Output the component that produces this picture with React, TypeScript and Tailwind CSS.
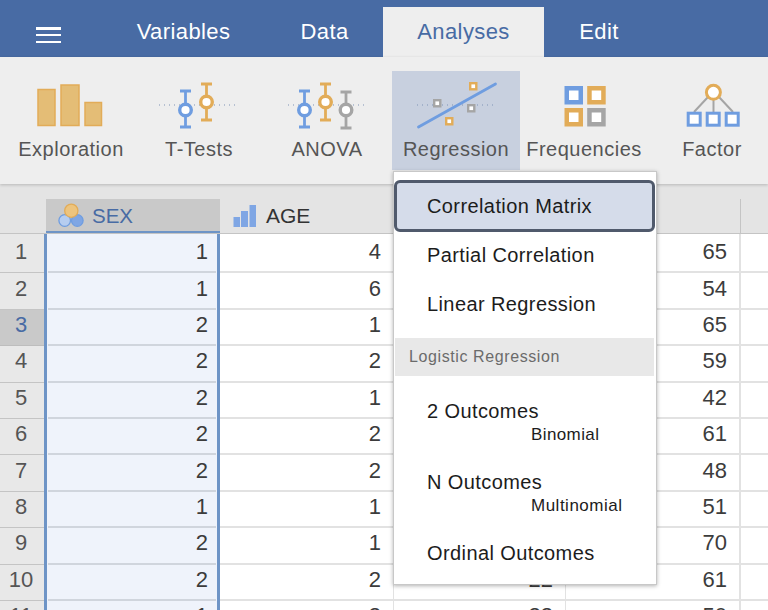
const tabs = [
  { name: "Variables", width: "w-[165px]" },
  { name: "Data", width: "w-[117px]" },
  { name: "Analyses", width: "w-[161px]", active: true },
  { name: "Edit", width: "w-[110px]" },
];

const rows = [
  { n: 1, sex: 1, age: 4, c: "", d: 65 },
  { n: 2, sex: 1, age: 6, c: "", d: 54 },
  { n: 3, sex: 2, age: 1, c: "", d: 65 },
  { n: 4, sex: 2, age: 2, c: "", d: 59 },
  { n: 5, sex: 2, age: 1, c: "", d: 42 },
  { n: 6, sex: 2, age: 2, c: "", d: 61 },
  { n: 7, sex: 2, age: 2, c: "", d: 48 },
  { n: 8, sex: 1, age: 1, c: "", d: 51 },
  { n: 9, sex: 2, age: 1, c: "", d: 70 },
  { n: 10, sex: 2, age: 2, c: "22", d: 61 },
  { n: 11, sex: 1, age: 3, c: "23", d: 50 },
];

const BLUE = "#6f9de0";
const ORANGE = "#e2ac58";
const GRAY = "#a5a5a5";

function Whisker({ x, top, bottom, cy, color }: { x: number; top: number; bottom: number; cy: number; color: string }) {
  return (
    <g stroke={color} strokeWidth="2.8" fill="none">
      <path d={`M${x - 5.5} ${top}H${x + 5.5}M${x - 5.5} ${bottom}H${x + 5.5}M${x} ${top}V${bottom}`} />
      <circle cx={x} cy={cy} r="5.8" fill="#fff" strokeWidth="3.4" />
    </g>
  );
}

function Dots({ x1, x2 }: { x1: number; x2: number }) {
  return <path d={`M${x1} 105H${x2}`} stroke="#7f93b5" strokeWidth="1" strokeDasharray="1 4" />;
}

function Square({ x, y, size, w, color }: { x: number; y: number; size: number; w: number; color: string }) {
  return <rect x={x + w / 2} y={y + w / 2} width={size - w} height={size - w} fill="#fff" stroke={color} strokeWidth={w} />;
}

// icons are drawn in page coordinates, the viewBox is the button's own slot
function ExplorationIcon() {
  return (
    <svg viewBox="7 71 128 60" className="h-[60px] w-[128px]">
      <g fill="#e4bd76" stroke={ORANGE} strokeWidth="1.5">
        <rect x="38" y="89.5" width="17" height="36" />
        <rect x="61" y="85" width="18" height="40.5" />
        <rect x="85" y="102.5" width="16.5" height="23" />
      </g>
    </svg>
  );
}

function TTestsIcon() {
  return (
    <svg viewBox="135 71 128 60" className="h-[60px] w-[128px]">
      <Dots x1={159} x2={238} />
      <Whisker x={185.5} top={91} bottom={127} cy={110} color={BLUE} />
      <Whisker x={206.5} top={84} bottom={120} cy={102} color={ORANGE} />
    </svg>
  );
}

function AnovaIcon() {
  return (
    <svg viewBox="263 71 128 60" className="h-[60px] w-[128px]">
      <Dots x1={288} x2={366} />
      <Whisker x={304.5} top={91} bottom={127} cy={110} color={BLUE} />
      <Whisker x={325.5} top={84} bottom={120} cy={102} color={ORANGE} />
      <Whisker x={346} top={92} bottom={128} cy={110} color={GRAY} />
    </svg>
  );
}

function RegressionIcon() {
  return (
    <svg viewBox="392 71 128 60" className="h-[60px] w-[128px]">
      <Dots x1={417} x2={497} />
      <path d="M418.5 127L495.5 84" stroke={BLUE} strokeWidth="2.8" strokeLinecap="round" />
      <Square x={469} y={82} size={8.5} w={2.4} color={ORANGE} />
      <Square x={433} y={99} size={8.5} w={2.4} color={GRAY} />
      <Square x={467} y={104} size={8.5} w={2.4} color={GRAY} />
      <Square x={445} y={117} size={8.5} w={2.4} color={ORANGE} />
    </svg>
  );
}

function FrequenciesIcon() {
  return (
    <svg viewBox="520 71 128 60" className="h-[60px] w-[128px]">
      <Square x={564.5} y={86} size={18.5} w={4.5} color={BLUE} />
      <Square x={587.2} y={86} size={18.5} w={4.5} color={ORANGE} />
      <Square x={564.5} y={108} size={18.5} w={4.5} color={ORANGE} />
      <Square x={587.2} y={108} size={18.5} w={4.5} color={GRAY} />
    </svg>
  );
}

function FactorIcon() {
  return (
    <svg viewBox="648 71 128 60" className="h-[60px] w-[128px]">
      <path d="M708 97L694 112M713.5 100V112M719 97L733 112" stroke={GRAY} strokeWidth="2" />
      <circle cx="713.4" cy="92.3" r="7" fill="#fff" stroke={ORANGE} strokeWidth="3" />
      <Square x={686.7} y={111.7} size={15} w={3} color={BLUE} />
      <Square x={705.7} y={111.7} size={15} w={3} color={BLUE} />
      <Square x={724.7} y={111.7} size={15} w={3} color={BLUE} />
    </svg>
  );
}

const tools = [
  { name: "Exploration", icon: <ExplorationIcon /> },
  { name: "T-Tests", icon: <TTestsIcon /> },
  { name: "ANOVA", icon: <AnovaIcon /> },
  { name: "Regression", icon: <RegressionIcon />, active: true },
  { name: "Frequencies", icon: <FrequenciesIcon /> },
  { name: "Factor", icon: <FactorIcon /> },
];

function NominalIcon() {
  return (
    <svg viewBox="0 0 26 24" className="-mt-[2px] h-[24px] w-[26px] shrink-0">
      <circle cx="6.7" cy="17.5" r="5.8" fill="#b6cdf0" stroke={BLUE} strokeWidth="1.3" />
      <circle cx="19.3" cy="17.5" r="5.8" fill="#7fa6e4" stroke={BLUE} strokeWidth="1.3" />
      <circle cx="13.3" cy="7.7" r="6.6" fill="#edc47e" stroke={ORANGE} strokeWidth="1.3" />
    </svg>
  );
}

function OrdinalIcon() {
  return (
    <svg viewBox="0 0 24 24" className="h-[24px] w-[24px] shrink-0">
      <rect x="0.5" y="13" width="6.5" height="10" fill="#7fa6e4" />
      <rect x="8" y="7" width="7" height="16" fill="#7fa6e4" />
      <rect x="16.5" y="1" width="6.5" height="22" fill="#7fa6e4" />
    </svg>
  );
}

function Menu() {
  return (
    <div className="absolute left-[393px] top-[171px] z-20 flex h-[414px] w-[264px] flex-col border border-[#c8c8c8] bg-white pt-[8px] text-[#1c1c1c] shadow-[0_1px_4px_rgba(0,0,0,0.3)]">
      <div className="mr-[1px] flex h-[52px] shrink-0 items-center rounded-[6px] border-[3px] border-[#505a6c] bg-[#d5dcea] pl-[30px] text-[20px] tracking-[0.4px]">
        Correlation Matrix
      </div>
      <div className="flex h-[46px] shrink-0 items-center pl-[33px] text-[20px] tracking-[0.4px]">Partial Correlation</div>
      <div className="flex h-[51px] shrink-0 items-center pl-[33px] text-[20px] tracking-[0.4px]">Linear Regression</div>
      <div className="ml-[1px] mr-[2px] mt-[9px] flex h-[38px] shrink-0 items-center bg-[#e8e8e8] pl-[14px] text-[16px] tracking-[0.6px] text-[#6b6b6b]">
        Logistic Regression
      </div>
      <div className="mt-[23px] h-[71px] pl-[33px]">
        <div className="text-[20px] leading-[24px] tracking-[0.4px]">2 Outcomes</div>
        <div className="pl-[104px] text-[17px] leading-[24px] tracking-[0.4px]">Binomial</div>
      </div>
      <div className="h-[71px] pl-[33px]">
        <div className="text-[20px] leading-[24px] tracking-[0.4px]">N Outcomes</div>
        <div className="pl-[104px] text-[17px] leading-[24px] tracking-[0.5px]">Multinomial</div>
      </div>
      <div className="pl-[33px] text-[20px] leading-[24px] tracking-[0.4px]">Ordinal Outcomes</div>
    </div>
  );
}

export default function App() {
  return (
    <div className="relative h-[610px] w-[768px] overflow-hidden bg-white font-['Liberation_Sans',sans-serif]">
      {/* tab bar */}
      <div className="flex h-[57px] items-end bg-[#486ba4] text-[22px] tracking-[0.4px] text-white">
        <div className="flex h-[57px] w-[101px] items-center pl-[36px] pt-[13px]">
          <div className="flex h-[16px] w-[25px] flex-col justify-between">
            <div className="h-[2.5px] bg-white" />
            <div className="h-[2.5px] bg-white" />
            <div className="h-[2.5px] bg-white" />
          </div>
        </div>
        {tabs.map((t) => (
          <div
            key={t.name}
            className={
              t.active
                ? `flex h-[50px] items-center justify-center bg-[#eeeeee] pb-[1px] text-[#486ba4] ${t.width}`
                : `flex h-[50px] items-center justify-center pb-[1px] ${t.width}`
            }
          >
            {t.name}
          </div>
        ))}
      </div>

      {/* ribbon */}
      <div className="relative z-10 flex h-[127px] bg-[#eeeeee] pl-[7px] pt-[14px] shadow-[0_1px_3px_rgba(0,0,0,0.2)]">
        {tools.map((t) => (
          <div
            key={t.name}
            className={
              t.active
                ? "ml-[1px] flex h-[99px] w-[128px] flex-col items-center bg-[#c8d0df] text-[20px] text-[#555]"
                : "flex h-[99px] w-[128px] flex-col items-center text-[20px] text-[#555]"
            }
          >
            {t.icon}
            <div className="mt-[5px] leading-[26px] tracking-[0.5px]">{t.name}</div>
          </div>
        ))}
      </div>

      {/* column headers */}
      <div className="flex h-[50px] items-end border-b border-[#c4c4c4] bg-[#e4e4e4] text-[21px]">
        <div className="w-[46px]" />
        <div className="flex h-[34px] w-[174px] items-center gap-[8px] border-b-[2px] border-[#6e94c6] bg-[#c9c9c9] pl-[12px] pt-[2px] text-[20.5px] text-[#486ba4]">
          <NominalIcon />
          SEX
        </div>
        <div className="flex h-[34px] w-[173px] items-center gap-[9px] pl-[13px] text-[#333]">
          <OrdinalIcon />
          AGE
        </div>
        <div className="h-[34px] w-[173px]" />
        <div className="h-[34px] w-[175px] border-r border-[#c4c4c4]" />
      </div>

      {/* data grid */}
      <div className="flex text-[22px] text-[#3c3c3c]">
        <div className="w-[44px] shrink-0 bg-[#e8e8e8] pt-[3px]">
          {rows.map((r) => (
            <div
              key={r.n}
              className={
                r.n === 3
                  ? "flex h-[36.4px] items-center justify-center border-b border-[#bdbdbd] bg-[#c9c9c9] pb-[6px] pr-[2px] text-[#486ba4]"
                  : "flex h-[36.4px] items-center justify-center border-b border-[#c4c4c4] pb-[6px] pr-[2px] text-[#555]"
              }
            >
              {r.n}
            </div>
          ))}
        </div>
        <div className="w-[176px] shrink-0 border-x-[3px] border-[#6e94c6] bg-[#eff3fb] px-[1px] pt-[3px]">
          {rows.map((r) => (
            <div key={r.n} className="flex h-[36.4px] items-center justify-end border-b-2 border-[#d0d5dd] pb-[5px] pr-[8px]">
              {r.sex}
            </div>
          ))}
        </div>
        <div className="w-[173px] shrink-0 pt-[3px]">
          {rows.map((r) => (
            <div key={r.n} className="flex h-[36.4px] items-center justify-end border-b-2 border-[#e2e2e2] pb-[5px] pr-[12px]">
              {r.age}
            </div>
          ))}
        </div>
        <div className="w-[173px] shrink-0 border-x border-[#e2e2e2] pt-[3px]">
          {rows.map((r) => (
            <div key={r.n} className="flex h-[36.4px] items-center justify-end border-b-2 border-[#e2e2e2] pb-[5px] pr-[12px]">
              {r.c}
            </div>
          ))}
        </div>
        <div className="w-[175px] shrink-0 border-r-2 border-[#e2e2e2] pt-[3px]">
          {rows.map((r) => (
            <div key={r.n} className="flex h-[36.4px] items-center justify-end border-b-2 border-[#e2e2e2] pb-[5px] pr-[12px]">
              {r.d}
            </div>
          ))}
        </div>
        <div className="flex-1 pt-[3px]">
          {rows.map((r) => (
            <div key={r.n} className="h-[36.4px] border-b-2 border-[#e2e2e2]" />
          ))}
        </div>
      </div>

      <Menu />
    </div>
  );
}
